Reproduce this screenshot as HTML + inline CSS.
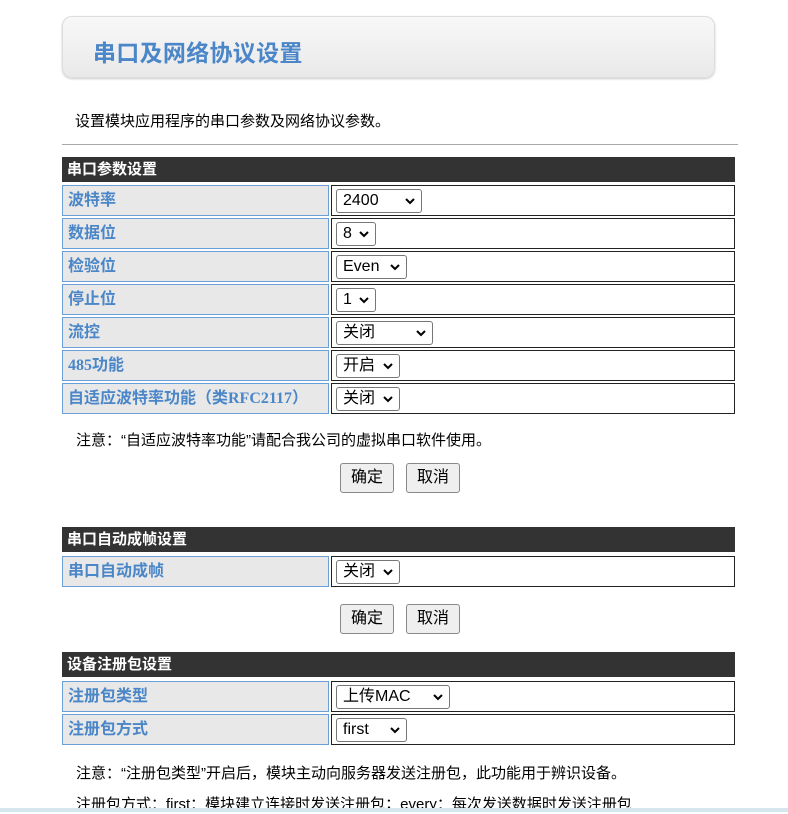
<!DOCTYPE html>
<html><head><meta charset="utf-8"><style>
*{margin:0;padding:0;box-sizing:border-box}
body{width:788px;height:812px;background:#fff;position:relative;overflow:hidden;font-family:"Liberation Sans","Noto Sans CJK SC",sans-serif;font-size:14px;color:#000}
.a{position:absolute}
.title{left:62px;top:16px;width:653px;height:62px;border:1px solid #ddd;border-radius:10px;background:linear-gradient(#f8f8f8,#e9e9e9);box-shadow:0 1px 2px #ccc}
.title span{position:absolute;left:30px;top:17px;font-size:23px;font-weight:bold;color:#4a86c8;letter-spacing:0.3px}
.hd{left:62px;width:673px;height:25px;background:#333;color:#fff;font-weight:bold;font-size:15px;line-height:25px;padding-left:5px}
.lb{left:62px;width:267px;height:31px;background:#e8e8e8;border:1px solid #6a9fd8;color:#4a86c8;font-weight:bold;font-size:16px;line-height:29px;padding-left:5px;font-family:"Liberation Serif","Noto Sans CJK SC",serif}
.vl{left:331px;width:404px;height:31px;border:1px solid #222;background:#fff}
.sel{position:absolute;left:4px;top:3px;height:24px;border:1px solid #777;border-radius:3px;background:#fff;font-size:16px;line-height:22px;padding-left:6px}
.sel svg{position:absolute;right:6px;top:8px}
.btn{height:30px;border:1px solid #888;border-radius:3px;background:#efefef;font-size:16px;line-height:28px;text-align:center}
.txt{font-size:15px}
</style></head><body>
<div class="a title"><span>串口及网络协议设置</span></div>
<div class="a txt" style="left:75px;top:110px">设置模块应用程序的串口参数及网络协议参数。</div>
<div class="a" style="left:62px;top:144px;width:676px;height:1px;background:#aaa"></div>

<div class="a hd" style="top:157px">串口参数设置</div>
<div class="a lb" style="top:185px">波特率</div><div class="a vl" style="top:185px"><div class="sel" style="width:86px">2400<svg width="10" height="7"><path d="M1 1l4 4 4-4" stroke="#000" stroke-width="2" fill="none"/></svg></div></div>
<div class="a lb" style="top:218px">数据位</div><div class="a vl" style="top:218px"><div class="sel" style="width:40px">8<svg width="10" height="7"><path d="M1 1l4 4 4-4" stroke="#000" stroke-width="2" fill="none"/></svg></div></div>
<div class="a lb" style="top:251px">检验位</div><div class="a vl" style="top:251px"><div class="sel" style="width:71px">Even<svg width="10" height="7"><path d="M1 1l4 4 4-4" stroke="#000" stroke-width="2" fill="none"/></svg></div></div>
<div class="a lb" style="top:284px">停止位</div><div class="a vl" style="top:284px"><div class="sel" style="width:40px">1<svg width="10" height="7"><path d="M1 1l4 4 4-4" stroke="#000" stroke-width="2" fill="none"/></svg></div></div>
<div class="a lb" style="top:317px">流控</div><div class="a vl" style="top:317px"><div class="sel" style="width:97px">关闭<svg width="10" height="7"><path d="M1 1l4 4 4-4" stroke="#000" stroke-width="2" fill="none"/></svg></div></div>
<div class="a lb" style="top:350px">485功能</div><div class="a vl" style="top:350px"><div class="sel" style="width:64px">开启<svg width="10" height="7"><path d="M1 1l4 4 4-4" stroke="#000" stroke-width="2" fill="none"/></svg></div></div>
<div class="a lb" style="top:383px">自适应波特率功能（类RFC2117）</div><div class="a vl" style="top:383px"><div class="sel" style="width:64px">关闭<svg width="10" height="7"><path d="M1 1l4 4 4-4" stroke="#000" stroke-width="2" fill="none"/></svg></div></div>
<div class="a txt" style="left:76px;top:429px">注意：“自适应波特率功能”请配合我公司的虚拟串口软件使用。</div>
<div class="a btn" style="left:340px;top:463px;width:54px">确定</div>
<div class="a btn" style="left:406px;top:463px;width:54px">取消</div>

<div class="a hd" style="top:527px">串口自动成帧设置</div>
<div class="a lb" style="top:556px">串口自动成帧</div><div class="a vl" style="top:556px"><div class="sel" style="width:64px">关闭<svg width="10" height="7"><path d="M1 1l4 4 4-4" stroke="#000" stroke-width="2" fill="none"/></svg></div></div>
<div class="a btn" style="left:340px;top:604px;width:54px">确定</div>
<div class="a btn" style="left:406px;top:604px;width:54px">取消</div>

<div class="a hd" style="top:652px">设备注册包设置</div>
<div class="a lb" style="top:681px">注册包类型</div><div class="a vl" style="top:681px"><div class="sel" style="width:114px">上传MAC<svg width="10" height="7"><path d="M1 1l4 4 4-4" stroke="#000" stroke-width="2" fill="none"/></svg></div></div>
<div class="a lb" style="top:714px">注册包方式</div><div class="a vl" style="top:714px"><div class="sel" style="width:71px">first<svg width="10" height="7"><path d="M1 1l4 4 4-4" stroke="#000" stroke-width="2" fill="none"/></svg></div></div>
<div class="a txt" style="left:76px;top:762px">注意：“注册包类型”开启后，模块主动向服务器发送注册包，此功能用于辨识设备。</div>
<div class="a txt" style="left:76px;top:793px">注册包方式：first：模块建立连接时发送注册包；every：每次发送数据时发送注册包</div>
<div class="a" style="left:0;top:808px;width:788px;height:4px;background:#d6e6ee"></div>
</body></html>
